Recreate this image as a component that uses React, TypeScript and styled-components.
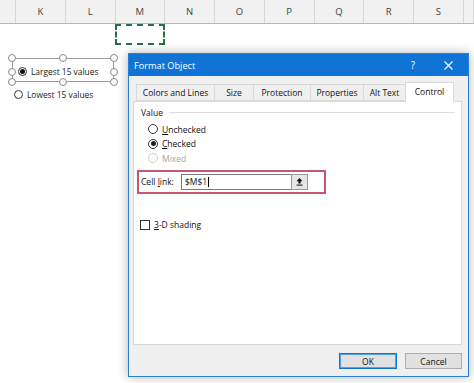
import React from "react";
import styled, { createGlobalStyle } from "styled-components";

const Global = createGlobalStyle`
  html, body { margin: 0; padding: 0; background: #fff; }
  body { font-family: "Open Sans", "Noto Sans", sans-serif; }
  * { box-sizing: border-box; }
`;

const Page = styled.div`
  position: relative;
  width: 474px;
  height: 383px;
  overflow: hidden;
  background: #fff;
`;

const HeaderRow = styled.div`
  display: grid;
  grid-template-columns: 16px repeat(9, 49.75px) 1fr;
  height: 24px;
  background: #f1f1f1;
  border-bottom: 1px solid #b5b5b5;
`;

const HeaderCell = styled.div`
  display: flex;
  align-items: center;
  justify-content: center;
  border-right: 1px solid #d6d6d6;
  font-size: 9.5px;
  color: #444;
`;

const SheetArea = styled.div`
  padding-left: 115px;
`;

const CopyMarquee = styled.div`
  width: 50px;
  height: 21px;
  border: 2px dashed #217346;
`;

const FloatingControl = styled.div<{ $x: number; $y: number }>`
  position: absolute;
  left: ${(p) => p.$x}px;
  top: ${(p) => p.$y}px;
  display: flex;
  align-items: center;
  gap: 4px;
  font-size: 8.4px;
  color: #222;
  white-space: nowrap;
`;

const SelectionFrame = styled.div`
  position: absolute;
  left: 12px;
  top: 58px;
  width: 102px;
  height: 24px;
  border: 1px solid #9c9c9c;
`;

const Handle = styled.span<{ $x: string; $y: string }>`
  position: absolute;
  left: ${(p) => p.$x};
  top: ${(p) => p.$y};
  width: 8px;
  height: 8px;
  border-radius: 50%;
  background: #fff;
  border: 1px solid #8a8a8a;
  transform: translate(-50%, -50%);
`;

const SheetRadio = styled.span<{ $on?: boolean }>`
  width: 9px;
  height: 9px;
  border-radius: 50%;
  border: 1px solid #333;
  background: #fff;
  display: inline-flex;
  align-items: center;
  justify-content: center;
  &::after {
    content: "";
    width: 5px;
    height: 5px;
    border-radius: 50%;
    background: ${(p) => (p.$on ? "#111" : "transparent")};
  }
`;

const Dialog = styled.div`
  position: absolute;
  left: 128px;
  top: 53px;
  width: 341px;
  height: 324px;
  border: 1px solid #2a7fd4;
  background: #f0f0f0;
  box-shadow: 0 0 10px rgba(0, 0, 0, 0.3);
  display: flex;
  flex-direction: column;
`;

const TitleBar = styled.div`
  height: 22px;
  background: #0f74d6;
  color: #fff;
  display: flex;
  align-items: center;
  padding: 0 0 0 5px;
  font-size: 9.2px;
`;

const Title = styled.span`
  flex: 1;
`;

const TitleButton = styled.span<{ $w: number }>`
  width: ${(p) => p.$w}px;
  display: flex;
  justify-content: center;
  align-items: center;
  font-size: 10px;
`;

const Body = styled.div`
  flex: 1;
  display: flex;
  flex-direction: column;
  padding: 8px 6px 7px 4px;
`;

const TabRow = styled.div`
  display: flex;
  align-items: flex-end;
  height: 17px;
  padding-left: 3px;
  position: relative;
  z-index: 1;
`;

const Tab = styled.div<{ $w: number; $active?: boolean }>`
  width: ${(p) => p.$w}px;
  height: ${(p) => (p.$active ? 20 : 17)}px;
  margin-bottom: ${(p) => (p.$active ? -1 : 0)}px;
  margin-left: -1px;
  display: flex;
  align-items: center;
  justify-content: center;
  font-size: 8.5px;
  color: #111;
  background: ${(p) => (p.$active ? "#fff" : "#f0f0f0")};
  border: 1px solid #d9d9d9;
  border-bottom: ${(p) => (p.$active ? "none" : "1px solid #d9d9d9")};
  padding-bottom: ${(p) => (p.$active ? 2 : 0)}px;
  &:first-child { margin-left: 0; }
`;

const Panel = styled.div`
  height: 244px;
  background: #fff;
  border: 1px solid #d9d9d9;
  padding: 3px 6px 0 7px;
  display: flex;
  flex-direction: column;
  font-size: 8.5px;
  color: #111;
`;

const GroupHeader = styled.div`
  display: flex;
  align-items: center;
  gap: 6px;
  height: 14px;
  &::after {
    content: "";
    flex: 1;
    height: 1px;
    background: #dcdcdc;
  }
`;

const RadioList = styled.div`
  display: flex;
  flex-direction: column;
  margin: 3px 0 0 7px;
`;

const RadioRow = styled.div<{ $disabled?: boolean }>`
  display: flex;
  align-items: center;
  gap: 4px;
  height: 14.5px;
  color: ${(p) => (p.$disabled ? "#a6a6a6" : "#111")};
`;

const DialogRadio = styled.span<{ $on?: boolean; $disabled?: boolean }>`
  width: 10px;
  height: 10px;
  border-radius: 50%;
  border: 1px solid ${(p) => (p.$disabled ? "#cfcfcf" : "#333")};
  display: inline-flex;
  align-items: center;
  justify-content: center;
  &::after {
    content: "";
    width: 5px;
    height: 5px;
    border-radius: 50%;
    background: ${(p) => (p.$on ? "#222" : "transparent")};
  }
`;

const Key = styled.u`
  text-decoration: underline;
  text-underline-offset: 1px;
`;

const HighlightBox = styled.div`
  margin: 4px 0 0 -4px;
  width: 189px;
  height: 24px;
  border: 2px solid #c4586c;
  display: flex;
  align-items: center;
  padding-left: 2px;
`;

const FieldLabel = styled.span`
  width: 40px;
`;

const TextInput = styled.div`
  width: 110px;
  height: 16px;
  border: 1px solid #7a7a7a;
  border-right: none;
  background: #fff;
  display: flex;
  align-items: center;
  padding-left: 3px;
  font-size: 8.5px;
`;

const Caret = styled.span`
  width: 1px;
  height: 10px;
  background: #000;
  margin-left: 1px;
`;

const CollapseButton = styled.div`
  width: 17px;
  height: 16px;
  background: #e6e6e6;
  border: 1px solid #9a9a9a;
  display: flex;
  align-items: center;
  justify-content: center;
`;

const CheckRow = styled.div`
  margin: 24px 0 0 -1px;
  display: flex;
  align-items: center;
  gap: 4px;
  height: 14px;
`;

const CheckBox = styled.span`
  width: 10px;
  height: 10px;
  border: 1px solid #333;
  background: #fff;
`;

const Footer = styled.div`
  display: flex;
  justify-content: flex-end;
  gap: 8px;
  padding-top: 8px;
`;

const Button = styled.div<{ $default?: boolean; $w: number }>`
  width: ${(p) => p.$w}px;
  height: 16px;
  background: #e1e1e1;
  border: 1px solid ${(p) => (p.$default ? "#1273d0" : "#adadad")};
  box-shadow: ${(p) => (p.$default ? "inset 0 0 0 1px #5aa0e0" : "none")};
  display: flex;
  align-items: center;
  justify-content: center;
  font-size: 8.5px;
  color: #111;
`;

const columns = ["K", "L", "M", "N", "O", "P", "Q", "R", "S"];
const tabs: [string, number][] = [
  ["Colors and Lines", 79],
  ["Size", 40],
  ["Protection", 58],
  ["Properties", 54],
  ["Alt Text", 43],
  ["Control", 49],
];

export default function App() {
  return (
    <Page>
      <Global />
      <HeaderRow>
        <HeaderCell />
        {columns.map((c) => (
          <HeaderCell key={c}>{c}</HeaderCell>
        ))}
        <HeaderCell />
      </HeaderRow>
      <SheetArea>
        <CopyMarquee />
      </SheetArea>

      <SelectionFrame>
        <Handle $x="-1px" $y="-1px" />
        <Handle $x="50%" $y="-1px" />
        <Handle $x="calc(100% + 1px)" $y="-1px" />
        <Handle $x="-1px" $y="60%" />
        <Handle $x="calc(100% + 1px)" $y="60%" />
        <Handle $x="-1px" $y="calc(100% + 1px)" />
        <Handle $x="50%" $y="calc(100% + 1px)" />
        <Handle $x="calc(100% + 1px)" $y="calc(100% + 1px)" />
      </SelectionFrame>
      <FloatingControl $x={18} $y={66}>
        <SheetRadio $on />
        <span>Largest 15 values</span>
      </FloatingControl>
      <FloatingControl $x={14} $y={89}>
        <SheetRadio />
        <span>Lowest 15 values</span>
      </FloatingControl>

      <Dialog>
        <TitleBar>
          <Title>Format Object</Title>
          <TitleButton $w={30}>?</TitleButton>
          <TitleButton $w={40}>
            <svg width="9" height="9" viewBox="0 0 9 9">
              <path d="M0.5 0.5 L8.5 8.5 M8.5 0.5 L0.5 8.5" stroke="#fff" strokeWidth="1.1" />
            </svg>
          </TitleButton>
        </TitleBar>
        <Body>
          <TabRow>
            {tabs.map(([t, w]) => (
              <Tab key={t} $w={w} $active={t === "Control"}>
                {t}
              </Tab>
            ))}
          </TabRow>
          <Panel>
            <GroupHeader>Value</GroupHeader>
            <RadioList>
              <RadioRow>
                <DialogRadio />
                <span>
                  <Key>U</Key>nchecked
                </span>
              </RadioRow>
              <RadioRow>
                <DialogRadio $on />
                <span>
                  <Key>C</Key>hecked
                </span>
              </RadioRow>
              <RadioRow $disabled>
                <DialogRadio $disabled />
                <span>Mixed</span>
              </RadioRow>
            </RadioList>
            <HighlightBox>
              <FieldLabel>
                Cell <Key>l</Key>ink:
              </FieldLabel>
              <TextInput>
                $M$1
                <Caret />
              </TextInput>
              <CollapseButton>
                <svg width="9" height="9" viewBox="0 0 9 9">
                  <path d="M4.5 1 L1.5 4.2 H3.4 V6.6 H5.6 V4.2 H7.5 Z" fill="#111" />
                  <rect x="1.5" y="7.6" width="6" height="1" fill="#111" />
                </svg>
              </CollapseButton>
            </HighlightBox>
            <CheckRow>
              <CheckBox />
              <span>
                <Key>3</Key>-D shading
              </span>
            </CheckRow>
          </Panel>
          <Footer>
            <Button $default $w={58}>
              OK
            </Button>
            <Button $w={57}>Cancel</Button>
          </Footer>
        </Body>
      </Dialog>
    </Page>
  );
}
